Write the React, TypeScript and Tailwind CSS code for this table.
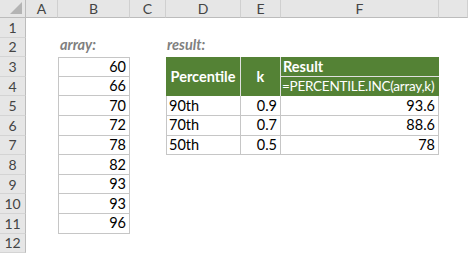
import React from "react";

const cols = ["A", "B", "C", "D", "E", "F", ""];
const arrayValues = [60, 66, 70, 72, 78, 82, 93, 93, 96];
const results = [
  { p: "90th", k: "0.9", r: "93.6" },
  { p: "70th", k: "0.7", r: "88.6" },
  { p: "50th", k: "0.5", r: "78" },
];

const line = "border-[#c6c6c6]";

const App = () => {
  return (
    <div
      className="w-[468px] h-[255px] overflow-hidden bg-white text-[14.5px] text-black"
      style={{ fontFamily: "Lato, 'Open Sans', sans-serif" }}
    >
      <div className="grid grid-cols-[26px_32px_72px_36px_75px_40px_158px_29px] grid-rows-[18px_repeat(12,19.6px)]">
        {/* corner */}
        <div className="relative bg-[#e6e6e6] border-r border-b border-[#bcbcbc]">
          <div className="absolute right-[3px] bottom-[3px] w-0 h-0 border-l-[12px] border-l-transparent border-b-[12px] border-b-[#b4b4b4]" />
        </div>
        {cols.map((c, i) => (
          <div
            key={i}
            className="flex items-center justify-center bg-[#e6e6e6] border-r border-b border-r-[#d0d0d0] border-b-[#bcbcbc] text-[#444] text-[14px]"
          >
            {c}
          </div>
        ))}

        {Array.from({ length: 12 }).map((_, r) => {
          const row = r + 1;
          return (
            <React.Fragment key={row}>
              <div className="flex items-center justify-center bg-[#e6e6e6] border-r border-b border-r-[#bcbcbc] border-b-[#d4d4d4] text-[#444] text-[14px]">
                {row}
              </div>
              {/* A */}
              <div />
              {/* B */}
              {row === 2 ? (
                <div className="flex items-end pl-[2px] pb-[1px] font-bold italic text-[#808080]">array:</div>
              ) : row >= 3 && row <= 11 ? (
                <div className={`flex items-center justify-end pr-[3px] border-l border-r border-b ${line} ${row === 3 ? "border-t" : ""}`}>
                  {arrayValues[row - 3]}
                </div>
              ) : (
                <div />
              )}
              {/* C */}
              <div />
              {/* D, E, F */}
              {row === 2 && (
                <>
                  <div className="flex items-end pl-[1px] pb-[1px] font-bold italic text-[#808080]">result:</div>
                  <div />
                  <div />
                </>
              )}
              {row === 3 && (
                <>
                  <div className="row-span-2 flex items-center justify-center bg-[#548235] text-white font-bold border-r border-[#e0e0e0]">
                    Percentile
                  </div>
                  <div className="row-span-2 flex items-center justify-center bg-[#548235] text-white font-bold border-r border-[#e0e0e0]">
                    k
                  </div>
                  <div className="flex items-center pl-[2px] bg-[#548235] text-white font-bold border-b border-[#e0e0e0]">
                    Result
                  </div>
                </>
              )}
              {row === 4 && (
                <div className="flex items-center pl-[1px] bg-[#548235] text-white text-[13.5px] tracking-[-0.25px] whitespace-nowrap overflow-hidden">
                  =PERCENTILE.INC(array,k)
                </div>
              )}
              {row >= 5 && row <= 7 && (
                <>
                  <div className={`flex items-center pl-[2px] border-l border-r border-b ${line}`}>
                    {results[row - 5].p}
                  </div>
                  <div className={`flex items-center justify-end pr-[3px] border-r border-b ${line}`}>
                    {results[row - 5].k}
                  </div>
                  <div className={`flex items-center justify-end pr-[3px] border-r border-b ${line}`}>
                    {results[row - 5].r}
                  </div>
                </>
              )}
              {(row === 1 || row >= 8) && (
                <>
                  <div />
                  <div />
                  <div />
                </>
              )}
              {/* G */}
              <div />
            </React.Fragment>
          );
        })}
      </div>
    </div>
  );
};

export default App;
